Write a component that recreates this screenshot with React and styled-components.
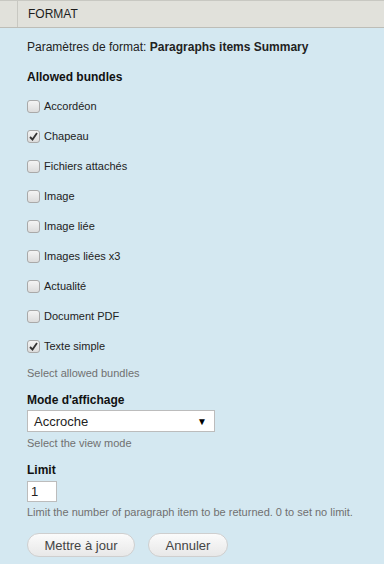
import React from "react";
import styled, { createGlobalStyle } from "styled-components";

const GlobalStyle = createGlobalStyle`
  html, body {
    margin: 0;
    padding: 0;
    background: #d4e8f1;
    font-family: "Liberation Sans", Arial, sans-serif;
    color: #222;
  }
`;

const Panel = styled.section`
  width: 384px;
  min-height: 564px;
  background: #d4e8f1;
`;

const Legend = styled.div`
  display: flex;
  height: 26px;
  background: #e1e1db;
  border-top: 1px solid #c8c8c2;
  border-bottom: 1px solid #bdbdb7;
`;

const Gutter = styled.div`
  width: 17px;
  border-right: 1px solid #c8c8c2;
`;

const LegendText = styled.span`
  padding-left: 10px;
  line-height: 26px;
  font-size: 12px;
  color: #1d1d1d;
`;

const Body = styled.div`
  padding: 10px 27px 0;
`;

const Intro = styled.p`
  margin: 0;
  font-size: 12px;
  line-height: 18px;
`;

const Label = styled.div`
  font-size: 12px;
  font-weight: bold;
  margin-top: ${(p) => p.top}px;
  line-height: 16px;
  color: #111;
`;

const Checks = styled.div`
  display: flex;
  flex-direction: column;
  gap: 14px;
  margin-top: 13px;
`;

const CheckRow = styled.label`
  display: flex;
  align-items: center;
  gap: 4px;
  height: 16px;
  font-size: 11px;
  color: #222;
`;

const Box = styled.span`
  width: 11px;
  height: 11px;
  border: 1px solid #a9a9a9;
  border-radius: 3px;
  background: linear-gradient(#f4f4f4, #dcdcdc);
  display: flex;
  align-items: center;
  justify-content: center;
`;

const Help = styled.div`
  font-size: 11px;
  color: #707070;
  margin-top: ${(p) => p.top}px;
  line-height: 14px;
`;

const Select = styled.div`
  box-sizing: border-box;
  width: 188px;
  height: 22px;
  margin-top: 2px;
  background: #fff;
  border: 1px solid #bcbcbc;
  display: flex;
  align-items: center;
  justify-content: space-between;
  padding: 0 7px 0 6px;
  font-size: 13px;
  color: #222;
`;

const Arrow = styled.span`
  font-size: 10px;
  color: #000;
`;

const Input = styled.div`
  box-sizing: border-box;
  width: 30px;
  height: 21px;
  margin-top: 3px;
  background: #fff;
  border: 1px solid #bcbcbc;
  padding-left: 3px;
  font-size: 13px;
  line-height: 19px;
`;

const Actions = styled.div`
  display: flex;
  gap: 13px;
  margin-top: 14px;
`;

const Button = styled.button`
  height: 24px;
  width: ${(p) => p.w}px;
  border: 1px solid #cfcfcf;
  border-radius: 12px;
  background: linear-gradient(#fbfbfb, #e8e8e8);
  font-family: "Liberation Sans", Arial, sans-serif;
  font-size: 13px;
  color: #444;
  padding: 0;
`;

const Tick = () => (
  <svg width="9" height="9" viewBox="0 0 9 9">
    <path d="M1 5 L3.5 7.5 L8 1" stroke="#333" strokeWidth="1.8" fill="none" />
  </svg>
);

const bundles = [
  ["Accordéon", false],
  ["Chapeau", true],
  ["Fichiers attachés", false],
  ["Image", false],
  ["Image liée", false],
  ["Images liées x3", false],
  ["Actualité", false],
  ["Document PDF", false],
  ["Texte simple", true],
];

export default function App() {
  return (
    <Panel>
      <GlobalStyle />
      <Legend>
        <Gutter />
        <LegendText>FORMAT</LegendText>
      </Legend>
      <Body>
        <Intro>
          Paramètres de format: <b>Paragraphs items Summary</b>
        </Intro>
        <Label top={13}>Allowed bundles</Label>
        <Checks>
          {bundles.map(([name, on]) => (
            <CheckRow key={name}>
              <Box>{on && <Tick />}</Box>
              {name}
            </CheckRow>
          ))}
        </Checks>
        <Help top={12}>Select allowed bundles</Help>
        <Label top={12}>Mode d'affichage</Label>
        <Select>
          Accroche
          <Arrow>▼</Arrow>
        </Select>
        <Help top={4}>Select the view mode</Help>
        <Label top={12}>Limit</Label>
        <Input>1</Input>
        <Help top={3}>Limit the number of paragraph item to be returned. 0 to set no limit.</Help>
        <Actions>
          <Button w={108}>Mettre à jour</Button>
          <Button w={80}>Annuler</Button>
        </Actions>
      </Body>
    </Panel>
  );
}
